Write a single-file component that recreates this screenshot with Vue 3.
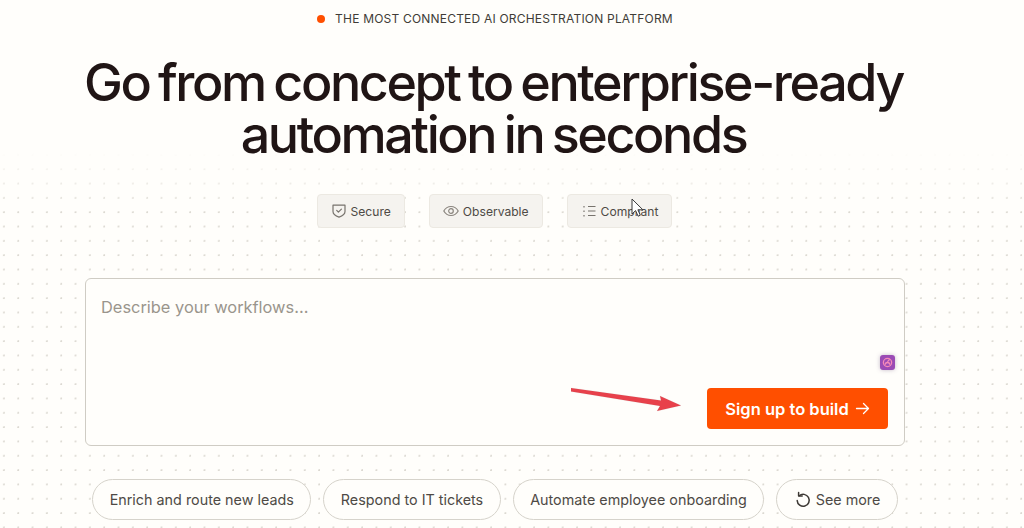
<script setup>
const chips = [
  { label: 'Secure', icon: 'shield' },
  { label: 'Observable', icon: 'eye' },
  { label: 'Compliant', icon: 'list' },
]
const pills = ['Enrich and route new leads', 'Respond to IT tickets', 'Automate employee onboarding']
</script>

<template>
  <div class="page">
    <div class="dots"></div>
    <main class="col">
      <div class="eyebrow"><span class="dot"></span>THE MOST CONNECTED AI ORCHESTRATION PLATFORM</div>
      <h1>Go from concept to enterprise-ready<br />automation in seconds</h1>
      <div class="chips">
        <div v-for="c in chips" :key="c.label" class="chip">
          <svg v-if="c.icon === 'shield'" width="16" height="16" viewBox="0 0 16 16" fill="none" stroke="#77736d" stroke-width="1.2" stroke-linejoin="round" stroke-linecap="round">
            <path d="M2 2.200h12v6.300c0 2.800-3 4.600-6 5.600-3-1-6-2.800-6-5.600z" />
            <path d="M5.700 7.400l1.700 1.700 3-3" />
          </svg>
          <svg v-else-if="c.icon === 'eye'" width="16" height="16" viewBox="0 0 16 16" fill="none" stroke="#8a857e" stroke-width="1.200">
            <path d="M.8 8c1.700-3 4-4.500 7.200-4.500S13.500 5 15.200 8c-1.700 3-4 4.500-7.200 4.500S2.500 11 .8 8z" />
            <circle cx="8" cy="8" r="2.300" />
          </svg>
          <svg v-else width="16" height="16" viewBox="0 0 16 16" fill="none" stroke="#77736d" stroke-width="1.100">
            <path d="M7 3.500h7.500M7 8h7.500M7 12.500h7.500" />
            <path d="M3 3v1.500M3 7.500V9M3 12v1.500" stroke-width="1.200" />
          </svg>
          <span>{{ c.label }}</span>
        </div>
      </div>
      <div class="card">
        <div class="placeholder">Describe your workflows...</div>
        <div class="badge-row">
          <span class="badge">
            <svg width="11" height="11" viewBox="0 0 12 12" fill="none" stroke="#f58ab8" stroke-width="1.400">
              <circle cx="6" cy="6" r="4.500" />
              <path d="M3.500 8.500a2.500 2.500 0 0 1 5 0M6 5l2.500-2.500" />
            </svg>
          </span>
        </div>
        <div class="action-row">
          <button class="cta">Sign up to build
            <svg width="15" height="15" viewBox="0 0 15 15" fill="none" stroke="#fff" stroke-width="1.300" stroke-linecap="round" stroke-linejoin="round">
              <path d="M1.500 7.500h12M8.500 2.500l5 5-5 5" />
            </svg>
          </button>
        </div>
      </div>
      <div class="pills">
        <button v-for="p in pills" :key="p" class="pill">{{ p }}</button>
        <button class="pill more">
          <svg width="18" height="18" viewBox="0 0 18 18" fill="none" stroke="#3d3935" stroke-width="1.500" stroke-linecap="round" stroke-linejoin="round">
            <path d="M5.200 4.800A6 6 0 1 1 3.200 9.600" />
            <path d="M4.600 1.500v3.600h3.600" />
          </svg>
          See more
        </button>
      </div>
    </main>
    <svg class="arrow" width="120" height="34" viewBox="0 0 120 34">
      <path d="M0 1 L90 13.500 L89 9 L110 18.500 L86 24 L89 19 L0 4.500z" fill="#e8414b" stroke="#6b6b6b" stroke-opacity=".15" stroke-width=".5" />
    </svg>
    <svg class="cursor" width="14" height="20" viewBox="0 0 14 20">
      <path d="M1 1v15l3.600-3.400 2.500 5.600 2.200-1-2.400-5.400h5z" fill="#fff" stroke="#3a3a3a" stroke-width="1" />
    </svg>
  </div>
</template>

<style>
html, body { margin: 0; background: #fffefb; }
</style>

<style scoped>
.page {
  position: relative;
  width: 1024px;
  height: 528px;
  overflow: hidden;
  background: #fffefb;
  font-family: Inter, "Liberation Sans", sans-serif;
  color: #36322e;
}
.dots {
  position: absolute;
  inset: 151px 0 0 0;
  background-image: radial-gradient(circle at 4px 4px, #dcd9d2 0.7px, transparent 1.200px);
  background-size: 14.330px 14.330px;
  -webkit-mask-image: linear-gradient(to bottom, transparent 0, #000 60px);
  mask-image: linear-gradient(to bottom, transparent 0, #000 60px);
}
.col {
  position: relative;
  width: 990px;
  display: flex;
  flex-direction: column;
  align-items: center;
}
.eyebrow {
  display: flex;
  align-items: center;
  gap: 10px;
  height: 18px;
  margin-top: 10px;
  font-size: 12px;
  line-height: 18px;
  color: #403c37;
  letter-spacing: .2px;
}
.dot {
  width: 8px;
  height: 8px;
  border-radius: 50%;
  background: #ff4f00;
}
h1 {
  margin: 29px 0 0;
  padding-right: 3px;
  font-size: 52px;
  line-height: 52px;
  font-weight: 450;
  letter-spacing: -2.400px;
  word-spacing: -3px;
  text-align: center;
  color: #201515;
  white-space: nowrap;
}
.chips {
  display: flex;
  gap: 24px;
  margin-top: 33px;
  padding-right: 1px;
}
.chip {
  display: flex;
  align-items: center;
  gap: 4px;
  height: 32px;
  padding: 0 13px;
  background: #f5f3ef;
  border: 1px solid #ece9e2;
  border-radius: 4px;
  font-size: 12.100px;
  color: #4e4a45;
}
.card {
  box-sizing: border-box;
  width: 820px;
  height: 168px;
  margin-top: 50px;
  padding: 16px 16px 16px 15px;
  background: #fffefb;
  border: 1px solid #cfccc4;
  border-radius: 6px;
  display: flex;
  flex-direction: column;
}
.placeholder {
  font-size: 16.400px;
  line-height: 24px;
  color: #9a958c;
}
.badge-row {
  display: flex;
  justify-content: flex-end;
  margin-top: 36px;
  margin-right: -7px;
}
.badge {
  width: 15px;
  height: 15px;
  border-radius: 3px;
  background: #9b4bb5;
  box-shadow: 0 0 4px rgba(90, 60, 110, .35);
  display: flex;
  align-items: center;
  justify-content: center;
}
.action-row {
  display: flex;
  justify-content: flex-end;
  margin-top: 18px;
}
.cta {
  width: 181px;
  height: 41px;
  border: 0;
  border-radius: 4px;
  background: #ff4f00;
  color: #fff;
  font: 600 16.500px Inter, "Liberation Sans", sans-serif;
  display: flex;
  align-items: center;
  justify-content: center;
  gap: 6px;
}
.pills {
  display: flex;
  gap: 12px;
  margin-top: 33px;
}
.pill {
  height: 41px;
  padding: 0 16.500px;
  background: #fffefb;
  border: 1px solid #d6d3cb;
  border-radius: 21px;
  font: 400 14.350px Inter, "Liberation Sans", sans-serif;
  color: #4e4a45;
  display: flex;
  align-items: center;
  gap: 4px;
  white-space: nowrap;
}
.arrow {
  position: absolute;
  left: 571px;
  top: 387px;
}
.cursor {
  position: absolute;
  left: 631px;
  top: 198px;
}
</style>
